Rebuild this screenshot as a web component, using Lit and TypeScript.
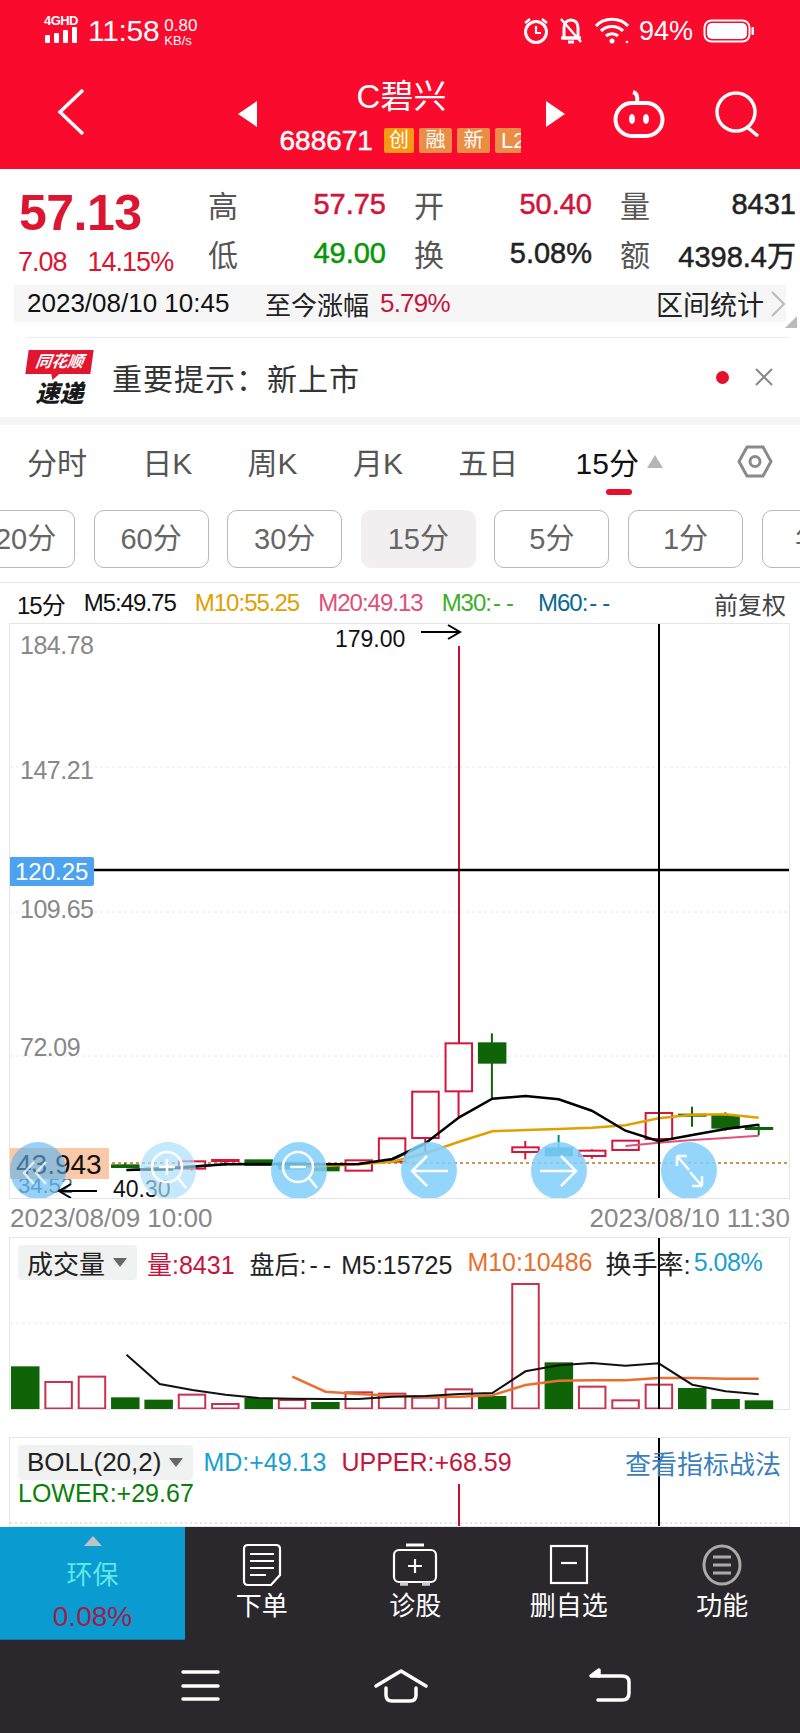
import { LitElement, html, css, svg } from "lit";
import { customElement } from "lit/decorators.js";

const RED = "#d7143a";
const GREEN = "#0f6408";
const TEAL = "#0a8a8a";
const step = 33.35;
const cx = (i: number) => 25 + step * i;
// the numbers below were read off the reference crops, hence the z scale
const my = (z: number) => 980 + z / 3;
const vy = (z: number) => 1230 + z / 3;
const poly = (pts: number[][], scale: (z: number) => number) =>
  pts.map(([x, z]) => `${(x / 1.96).toFixed(1)},${scale(z).toFixed(1)}`).join(" ");

type Candle = [number, number, number, number, number, string, boolean?];
// index, box top, box bottom, wick top, wick bottom, colour, filled
const candles: Candle[] = [
  [3, 556, 561, 550, 564, GREEN, true],
  [4, 566, 570, 562, 572, GREEN, true],
  [5, 544, 566, 540, 572, RED],
  [6, 540, 543, 538, 557, RED],
  [7, 541, 555, 541, 558, GREEN, true],
  [8, 548, 566, 548, 566, TEAL, true],
  [9, 558, 571, 558, 572, GREEN, true],
  [10, 541, 572, 541, 572, RED],
  [11, 475, 545, 475, 545, RED],
  [12, 335, 474, 335, 515, RED],
  [13, 190, 334, 190, 410, RED],
  [14, 190, 248, 160, 356, GREEN, true],
  [15, 502, 516, 483, 538, RED],
  [16, 505, 526, 465, 526, TEAL, true],
  [17, 512, 528, 508, 536, RED],
  [18, 482, 510, 482, 510, RED],
  [19, 399, 477, 399, 477, RED],
  [20, 404, 406, 380, 440, GREEN, true],
  [21, 408, 443, 397, 452, GREEN, true],
  [22, 444, 446, 432, 466, GREEN, true],
];

const volumes: [number, boolean][] = [
  [412, true], [456, false], [440, false], [505, true], [512, true], [494, false],
  [522, false], [507, true], [510, false], [519, true], [487, false], [491, false],
  [503, false], [478, false], [501, true], [162, false], [400, true], [470, false],
  [511, false], [464, false], [477, true], [510, true], [514, true],
];

const mainBlack = [[248,570],[311,568],[377,560],[442,553],[507,552],[573,553],[638,553],[703,552],[769,537],[834,490],[900,412],[965,356],[1030,348],[1095,358],[1160,392],[1226,452],[1291,484],[1357,465],[1422,447],[1487,434]];
const mainOrange = [[573,562],[638,558],[703,553],[769,545],[834,520],[900,485],[965,454],[1030,450],[1095,447],[1160,443],[1226,436],[1291,415],[1357,404],[1422,403],[1487,413]];
const mainPink = [[1226,498],[1291,488],[1357,480],[1422,474],[1487,467]];
const mainTeal = [[248,570],[442,553],[703,551],[769,540],[834,492]];
const volBlack = [[248,374],[313,462],[377,480],[442,494],[507,504],[573,506],[638,507],[703,507],[769,500],[834,498],[900,492],[965,489],[1030,424],[1095,406],[1160,399],[1226,407],[1291,400],[1357,464],[1422,484],[1487,493]];
const volOrange = [[573,440],[638,485],[703,492],[769,497],[834,500],[900,500],[965,496],[1030,465],[1095,452],[1160,451],[1226,451],[1291,444],[1357,444],[1422,446],[1487,446]];

@customElement("app-root")
export class AppRoot extends LitElement {
  static styles = css`
    :host {
      display: block;
      width: 800px;
      height: 1733px;
      overflow: hidden;
      background: #fff;
      font-family: "Liberation Sans", "Noto Sans CJK SC", sans-serif;
      color: #222;
    }
    .page { display: flex; flex-direction: column; height: 1733px; }

    .header { height: 169px; background: #fa0a2c; color: #fff; flex: none; }
    .status { display: flex; align-items: center; height: 30px; padding: 16px 45px 0 44px; }
    .net { width: 36px; margin-right: 8px; }
    .net b { display: block; font-size: 13px; line-height: 12px; letter-spacing: -0.6px; }
    .time { font-size: 30px; line-height: 30px; margin-right: 5px; letter-spacing: -0.3px; }
    .speed { font-size: 13px; line-height: 11px; text-align: left; }
    .speed span:first-child { display: block; font-size: 17px; line-height: 18px; }
    .status-right { margin-left: auto; display: flex; align-items: center; gap: 10px; }
    .alarm { margin-right: -2px; }
    .batt-text { font-size: 27px; margin: 0 0 0 -5px; }

    .nav { display: flex; align-items: center; height: 111px; padding: 12px 0 0 57px; }
    .nav .back { width: 181px; flex: none; }
    .center { width: 289px; flex: none; display: flex; flex-direction: column; align-items: center; }
    .title { font-size: 33px; line-height: 38px; margin-top: 6px; }
    .code { display: flex; align-items: center; gap: 5px; height: 30px; margin-top: 10px; font-size: 28px; width: 244px; }
    .code .num { margin-right: 6px; -webkit-text-stroke: 0.5px #fff; }
    .chip { height: 25px; width: 33px; background: #ea8e45; border-radius: 2px; font-size: 20px; line-height: 25px; text-align: center; flex: none; overflow: hidden; }
    .chip.first { width: 30px; background: #f59a12; }
    .chip.last { width: 26px; text-align: left; padding-left: 6px; box-sizing: border-box; border-radius: 2px 0 0 2px; white-space: nowrap; font-size: 22px; }
    .nav-tools { display: flex; gap: 49px; margin-left: 48px; align-items: center; }

    .quote { display: flex; height: 116px; flex: none; }
    .q-left { width: 208px; flex: none; padding-left: 19px; box-sizing: border-box; color: #dc1530; }
    .price { font-size: 50px; line-height: 56px; font-weight: 700; margin-top: 16px; letter-spacing: -0.5px; }
    .delta { font-size: 27px; line-height: 32px; margin-top: 5px; display: flex; gap: 21px; margin-left: -1px; letter-spacing: -1px; }
    .q-grid { display: grid; grid-template-columns: 178px 178px 176px; column-gap: 28px; grid-auto-rows: 49px; padding-top: 11px; }
    .cell { display: flex; justify-content: space-between; align-items: center; font-size: 29px; white-space: nowrap; }
    .cell span { font-size: 30px; color: #555; margin-top: -2px; }
    .cell b { font-weight: 400; -webkit-text-stroke: 0.5px currentColor; }
    .up { color: #d0143a; }
    .down { color: #0a960a; }
    .dark { color: #222; }

    .strip { display: flex; align-items: center; height: 37px; margin: 0 14px; background: #f6f6f6; flex: none; font-size: 26px; padding-left: 13px; position: relative; }
    .strip .date { width: 238px; color: #111; }
    .strip .pct { margin-left: 11px; color: #c8143c; letter-spacing: -0.8px; }
    .strip .stat { margin-left: auto; margin-right: 6px; font-size: 27px; }
    .strip::after { content: ""; position: absolute; right: -11px; bottom: -6px; border-style: solid; border-width: 0 0 12px 12px; border-color: transparent transparent #bbb transparent; }

    .news { height: 80px; margin: 15px 0 0; flex: none; display: flex; align-items: center; position: relative; padding: 0 27px; box-sizing: border-box; }
    .news::before { content: ""; position: absolute; top: 0; left: 27px; right: 10px; height: 1px; background: #ececec; }
    .logo { width: 65px; margin: 3px 20px 0 0; flex: none; }
    .logo-top { height: 24px; background: #e2162e; color: #fff; font-size: 16px; line-height: 24px; text-align: center; font-weight: 700; transform: skewX(-8deg); font-style: italic; position: relative; }
    .logo-top::after { content: ""; position: absolute; left: 26px; bottom: -6px; border-style: solid; border-width: 6px 6px 0 2px; border-color: #e2162e transparent transparent transparent; }
    .logo-bot { font-size: 24px; line-height: 26px; font-weight: 900; font-style: italic; text-align: center; color: #1a1a1a; margin-top: 7px; }
    .news-text { font-size: 30px; color: #333; letter-spacing: 1px; }
    .dot { width: 13px; height: 13px; background: #e60f2c; border-radius: 50%; margin-left: auto; margin-right: 26px; }
    .band { height: 8px; background: #f5f5f5; flex: none; }

    .tabs { display: flex; align-items: center; height: 72px; padding: 0 27px 8px; gap: 55.3px; font-size: 30px; color: #555; flex: none; }
    .tab.active { color: #111; position: relative; display: flex; align-items: center; margin-left: 2px; }
    .tab.active::after { content: ""; position: absolute; left: 30px; bottom: -12px; width: 26px; height: 6px; border-radius: 3px; background: #e60f2c; }
    .caret { margin-left: 8px; }
    .hex { margin-left: auto; }

    .periods { display: flex; gap: 18.6px; margin: 5px 0 0 -40px; height: 58px; flex: none; }
    .period { width: 115px; flex: none; box-sizing: border-box; border: 1px solid #b8b8b8; border-radius: 10px; font-size: 29px; line-height: 56px; text-align: center; color: #666; }
    .period.on { background: #f1efef; border-color: #f1efef; }
    .sep { height: 1px; background: #e8e8e8; flex: none; margin-top: 14px; }

    .ma { display: flex; align-items: center; height: 40px; padding: 0 14px 0 17px; font-size: 24px; white-space: nowrap; flex: none; color: #111; letter-spacing: -1px; }
    .ma span { margin-right: 19px; }
    .ma .dash { letter-spacing: 5px; margin: 0 0 0 2px; }
    .ma .tail { margin: 0 0 0 auto; color: #444; letter-spacing: 0; }
    .c-m10 { color: #e0a000; }
    .c-m20 { color: #e0507a; }
    .c-m30 { color: #3cb028; }
    .c-m60 { color: #0a6a90; }

    .panel { margin: 0 10px 0 9px; border: 1px solid #e6e6e6; position: relative; flex: none; overflow: hidden; }
    .panel svg.plot { display: block; position: absolute; left: 0; top: 0; }
    .panel svg text { font-family: "Liberation Sans", "Noto Sans CJK SC", sans-serif; }
    .main { height: 574px; }
    .axis { letter-spacing: -0.5px; }
    .dates { display: flex; justify-content: space-between; height: 38px; align-items: center; font-size: 26px; color: #888; padding: 0 10px; flex: none; }
    .ctrl { position: absolute; left: 0; bottom: -1px; display: flex; gap: 74.3px; }
    .ctrl div { width: 56px; height: 57px; border-radius: 50%; background: rgba(130, 207, 250, 0.86); }
    .ctrl div.first { background: rgba(90, 180, 240, 0.62); }
    .ctrl div.pale { background: rgba(170, 222, 250, 0.68); }
    .ctrl svg { display: block; }

    .vol { height: 171px; }
    .bar-text { position: relative; display: flex; align-items: center; height: 35px; margin: 7px 0 0 8px; font-size: 25px; white-space: nowrap; }
    .pick { display: flex; align-items: center; background: #f0f1f1; border-radius: 4px; height: 35px; padding: 0 10px 0 9px; margin-right: 10px; font-size: 26px; color: #222; }
    .pick i { margin-left: 8px; border-style: solid; border-width: 9px 7px 0; border-color: #666 transparent transparent; }
    .bar-text span { margin-right: 15px; }
    .bar-text .dash { letter-spacing: 5px; margin: 0 5px 0 3px; }
    .bar-text .rate { margin-right: 3px; font-size: 26px; }
    .c-red { color: #c8143c; }
    .bar-text .c-orange { color: #e87030; margin-right: 13px; }
    .bar-text .c-blue { color: #18a0d0; }
    .bar-text .tight { margin: 0; letter-spacing: -0.5px; }
    .boll { height: 88px; margin-top: 27px; }
    .bar-text .link { margin-left: auto; margin-right: 8px; color: #3a80c0; font-size: 26px; }
    .lower { position: relative; font-size: 25px; line-height: 26px; color: #0a800a; margin: 0 0 0 8px; }

    .bottom { flex: 1; background: #2a282d; color: #fff; }
    .toolbar { display: flex; height: 113px; }
    .sector { width: 185px; background: #0a9bd0; display: flex; flex-direction: column; align-items: center; flex: none; border-bottom: 1px solid #0b7fa8; box-sizing: border-box; }
    .sector i { margin-top: 9px; border-style: solid; border-width: 0 9px 10px; border-color: transparent transparent #bcc4c8; }
    .sector b { font-weight: 400; font-size: 26px; line-height: 30px; color: #5fe8e8; margin-top: 14px; }
    .sector em { font-style: normal; font-size: 28px; line-height: 32px; color: #a0204a; margin-top: 11px; }
    .tools { display: flex; flex: 1; }
    .tool { width: 153.5px; flex: none; display: flex; flex-direction: column; align-items: center; font-size: 26px; line-height: 30px; padding-top: 16px; box-sizing: border-box; }
    .tool svg { display: block; margin-bottom: 4px; }
    .sys { height: 93px; }
    .sys svg { display: block; }
  `;

  mainChart() {
    return svg`<svg class="plot" width="779" height="574" viewBox="10 624 779 574" fill="none">
      ${[767, 912, 1056].map((y) => svg`<line x1="10" x2="789" y1=${y} y2=${y} stroke="#e8e8e8" stroke-dasharray="3 3"/>`)}
      <line x1="10" x2="789" y1="1163" y2="1163" stroke="#c0701c" stroke-width="1.5" stroke-dasharray="3 3"/>
      <line x1="459" x2="459" y1="646" y2="1050" stroke="#c8102e" stroke-width="2"/>
      ${candles.map(([i, t, b, wt, wb, c, fill]) => {
        const x = cx(i);
        return svg`<line x1=${x} x2=${x} y1=${my(wt)} y2=${my(wb)} stroke=${c} stroke-width="2"/>
          <rect x=${x - 13} y=${my(t)} width="26.5" height=${Math.max((b - t) / 3, 1)} fill=${fill ? c : "#fff"} stroke=${c} stroke-width="2"/>`;
      })}
      <polyline points=${poly(mainTeal, my)} stroke="#0a6a90" stroke-width="2"/>
      <polyline points=${poly(mainPink, my)} stroke="#e0507a" stroke-width="2"/>
      <polyline points=${poly(mainOrange, my)} stroke="#e0a000" stroke-width="2.5"/>
      <polyline points=${poly(mainBlack, my)} stroke="#000" stroke-width="2.5"/>
      <line x1="94" x2="789" y1="870" y2="870" stroke="#000" stroke-width="2.5"/>
      <line x1="659" x2="659" y1="624" y2="1198" stroke="#000" stroke-width="2"/>
      <g class="axis" font-size="25" fill="#888">
        <text x="20" y="654">184.78</text>
        <text x="20" y="779">147.21</text>
        <text x="20" y="918">109.65</text>
        <text x="20" y="1056">72.09</text>
      </g>
      <rect x="9" y="857" width="85" height="29" rx="2" fill="#4da3ef"/>
      <text x="15" y="880" font-size="24" fill="#fff">120.25</text>
      <text x="335" y="647" font-size="23" fill="#111">179.00</text>
      <path d="M421 632H459M448 625L460 632L448 639" stroke="#000" stroke-width="2"/>
      <text x="18" y="1193" font-size="22" fill="#5f7f94">34.52</text>
      <rect x="9" y="1148" width="100" height="31" fill="#fbc8a8"/>
      <text x="16" y="1174" font-size="28" fill="#111">43.943</text>
      <path d="M97 1191H60M71 1184L59 1191L71 1198" stroke="#000" stroke-width="2"/>
      <text x="113" y="1197" font-size="23" fill="#111">40.30</text>
    </svg>`;
  }

  controls() {
    const s = "#fff";
    const icons = [
      svg`<path d="M24 20L14 31L24 42M36 20L26 31L36 42" stroke=${s} stroke-width="2.5" opacity=".7"/>`,
      svg`<circle cx="27" cy="25" r="15" stroke=${s} stroke-width="2.5"/><path d="M38 36L46 46M27 17V33M19 25H35" stroke=${s} stroke-width="2.5"/>`,
      svg`<circle cx="27" cy="25" r="15" stroke=${s} stroke-width="2.5"/><path d="M38 36L46 46M19 25H35" stroke=${s} stroke-width="2.5"/>`,
      svg`<path d="M47 29H12M26 14L11 29L26 44" stroke=${s} stroke-width="2.5"/>`,
      svg`<path d="M9 29H44M30 14L45 29L30 44" stroke=${s} stroke-width="2.5"/>`,
      svg`<path d="M16 14L28 28M16 14V24M16 14H26M41 44L29 30M41 44V34M41 44H31" stroke=${s} stroke-width="2.5"/>`,
    ];
    return html`<div class="ctrl">
      ${icons.map(
        (ic, i) => html`<div class=${i === 0 ? "first" : i === 1 ? "pale" : ""}>
          <svg width="56" height="57" viewBox="0 0 56 57" fill="none">${ic}</svg>
        </div>`
      )}
    </div>`;
  }

  volChart() {
    return svg`<svg class="plot" width="779" height="171" viewBox="10 1238 779 171" fill="none">
      <line x1="10" x2="789" y1="1323" y2="1323" stroke="#e8e8e8" stroke-dasharray="3 3"/>
      ${volumes.map(([z, fill], i) => {
        const top = vy(z);
        return svg`<rect x=${cx(i) - 13} y=${top} width="26.5" height=${1408.5 - top} fill=${fill ? GREEN : "#fff"} stroke=${fill ? GREEN : "#c8324c"} stroke-width="2"/>`;
      })}
      <polyline points=${poly(volOrange, vy)} stroke="#e87030" stroke-width="2.5"/>
      <polyline points=${poly(volBlack, vy)} stroke="#111" stroke-width="2"/>
      <line x1="659" x2="659" y1="1238" y2="1410" stroke="#000" stroke-width="2"/>
    </svg>`;
  }

  bollChart() {
    return svg`<svg class="plot" width="779" height="88" viewBox="10 1438 779 88" fill="none">
      <line x1="10" x2="789" y1="1523" y2="1523" stroke="#ccc" stroke-dasharray="2 3"/>
      <line x1="459" x2="459" y1="1484" y2="1527" stroke="#c8102e" stroke-width="2"/>
      <line x1="659" x2="659" y1="1438" y2="1527" stroke="#000" stroke-width="2"/>
    </svg>`;
  }

  render() {
    return html`<div class="page">
      <div class="header">
        <div class="status">
          <div class="net">
            <b>4GHD</b>
            <svg width="34" height="16" viewBox="0 0 34 16" fill="#fff">
              <rect x="1" y="8" width="5" height="8" rx="1"/><rect x="10" y="6" width="5" height="10" rx="1"/>
              <rect x="19" y="3" width="5" height="13" rx="1"/><rect x="28" y="0" width="5" height="16" rx="1"/>
            </svg>
          </div>
          <div class="time">11:58</div>
          <div class="speed"><span>0.80</span><span>KB/s</span></div>
          <div class="status-right">
            <svg class="alarm" width="28" height="28" viewBox="0 0 28 28" fill="none" stroke="#fff" stroke-width="3">
              <circle cx="14" cy="15" r="10.5"/><path d="M14 9V16H19" stroke-width="2.2"/><path d="M3 6L8 2M25 6L20 2" stroke-width="2.5"/>
            </svg>
            <svg width="26" height="28" viewBox="0 0 26 28" fill="none" stroke="#fff" stroke-width="3">
              <path d="M6 21V11C6 6 9 3 13 3S20 6 20 11V21Z"/><path d="M3 21H23" /><path d="M10 25H16"/><path d="M3 2L23 25" stroke-width="2.5"/>
            </svg>
            <svg width="40" height="28" viewBox="0 0 40 28" fill="none" stroke="#fff" stroke-width="3.2">
              <path d="M2 9C10 0 26 0 34 9M7 14C13 8 23 8 29 14M12 19C15 16 21 16 24 19"/><circle cx="18" cy="24" r="2.5" fill="#fff" stroke="none"/><circle cx="33" cy="25" r="1.3" fill="#fff" stroke="none"/>
            </svg>
            <span class="batt-text">94%</span>
            <svg width="52" height="24" viewBox="0 0 52 24" fill="none">
              <rect x="1.5" y="1.5" width="45" height="21" rx="7" stroke="#fff" stroke-width="2"/>
              <rect x="4" y="4" width="40" height="16" rx="5" fill="#fff"/>
              <rect x="48.5" y="8" width="2.5" height="8" rx="1" fill="#fff"/>
            </svg>
          </div>
        </div>
        <div class="nav">
          <div class="back">
            <svg width="28" height="48" viewBox="0 0 28 48" fill="none" stroke="#fff" stroke-width="3.5"><path d="M26 2L3 24L26 46"/></svg>
          </div>
          <svg width="19" height="26" viewBox="0 0 19 26" fill="#fff"><path d="M19 0V26L0 13Z"/></svg>
          <div class="center">
            <div class="title">C碧兴</div>
            <div class="code">
              <span class="num">688671</span>
              <span class="chip first">创</span><span class="chip">融</span><span class="chip">新</span><span class="chip last">L2</span>
            </div>
          </div>
          <svg width="19" height="26" viewBox="0 0 19 26" fill="#fff"><path d="M0 0V26L19 13Z"/></svg>
          <div class="nav-tools">
            <svg width="52" height="48" viewBox="0 0 52 48" fill="none" stroke="#fff" stroke-width="4">
              <path d="M20 2C24 3 25 7 24 13"/><rect x="2.5" y="13" width="47" height="33" rx="16.5"/>
              <ellipse cx="19" cy="29" rx="3" ry="5" fill="#fff" stroke="none"/><ellipse cx="33" cy="29" rx="3" ry="5" fill="#fff" stroke="none"/>
            </svg>
            <svg width="46" height="46" viewBox="0 0 46 46" fill="none" stroke="#fff" stroke-width="3.5">
              <circle cx="22" cy="21" r="19"/><path d="M33 36L44 45"/>
            </svg>
          </div>
        </div>
      </div>

      <div class="quote">
        <div class="q-left">
          <div class="price">57.13</div>
          <div class="delta"><span>7.08</span><span>14.15%</span></div>
        </div>
        <div class="q-grid">
          <div class="cell"><span>高</span><b class="up">57.75</b></div>
          <div class="cell"><span>开</span><b class="up">50.40</b></div>
          <div class="cell"><span>量</span><b class="dark">8431</b></div>
          <div class="cell"><span>低</span><b class="down">49.00</b></div>
          <div class="cell"><span>换</span><b class="dark">5.08%</b></div>
          <div class="cell"><span>额</span><b class="dark">4398.4万</b></div>
        </div>
      </div>

      <div class="strip">
        <span class="date">2023/08/10 10:45</span>
        <span>至今涨幅</span><span class="pct">5.79%</span>
        <span class="stat">区间统计</span>
        <svg width="16" height="28" viewBox="0 0 16 28" fill="none" stroke="#bbb" stroke-width="2"><path d="M2 2L14 14L2 26"/></svg>
      </div>

      <div class="news">
        <div class="logo">
          <div class="logo-top">同花顺</div>
          <div class="logo-bot">速递</div>
        </div>
        <div class="news-text">重要提示：新上市</div>
        <div class="dot"></div>
        <svg width="18" height="18" viewBox="0 0 18 18" fill="none" stroke="#888" stroke-width="2"><path d="M1 1L17 17M17 1L1 17"/></svg>
      </div>
      <div class="band"></div>

      <div class="tabs">
        <span>分时</span><span>日K</span><span>周K</span><span>月K</span><span>五日</span>
        <span class="tab active">15分<svg class="caret" width="16" height="13" viewBox="0 0 16 13" fill="#b5b5b5"><path d="M8 0L16 13H0Z"/></svg></span>
        <svg class="hex" width="36" height="33" viewBox="0 0 36 33" fill="none" stroke="#8a8a8a" stroke-width="3">
          <path d="M10 2H26L34 16.5L26 31H10L2 16.5Z"/><circle cx="18" cy="16.5" r="5"/>
        </svg>
      </div>

      <div class="periods">
        ${["120分", "60分", "30分", "15分", "5分", "1分", "年K"].map(
          (p) => html`<div class="period ${p === "15分" ? "on" : ""}">${p}</div>`
        )}
      </div>
      <div class="sep"></div>

      <div class="ma">
        <span>15分</span><span>M5:49.75</span>
        <span class="c-m10">M10:55.25</span>
        <span class="c-m20">M20:49.13</span>
        <span class="c-m30">M30:<span class="dash">--</span></span>
        <span class="c-m60">M60:<span class="dash">--</span></span>
        <span class="tail">前复权</span>
      </div>

      <div class="panel main">${this.mainChart()}${this.controls()}</div>
      <div class="dates"><span>2023/08/09 10:00</span><span>2023/08/10 11:30</span></div>

      <div class="panel vol">
        ${this.volChart()}
        <div class="bar-text">
          <div class="pick">成交量<i></i></div>
          <span class="c-red">量:8431</span>
          <span>盘后:<span class="dash">--</span>M5:15725</span>
          <span class="c-orange">M10:10486</span>
          <span class="rate">换手率:</span><span class="c-blue tight">5.08%</span>
        </div>
      </div>

      <div class="panel boll">
        ${this.bollChart()}
        <div class="bar-text">
          <div class="pick">BOLL(20,2)<i></i></div>
          <span class="c-blue">MD:+49.13</span>
          <span class="c-red">UPPER:+68.59</span>
          <span class="link">查看指标战法</span>
        </div>
        <div class="lower">LOWER:+29.67</div>
      </div>

      <div class="bottom">
        <div class="toolbar">
          <div class="sector"><i></i><b>环保</b><em>0.08%</em></div>
          <div class="tools">
            <div class="tool">
              <svg width="40" height="44" viewBox="0 0 40 44" fill="none" stroke="#fff" stroke-width="2.2">
                <path d="M6 2H34Q38 2 38 6V32L29 42H6Q2 42 2 38V6Q2 2 6 2Z"/><path d="M8 11H32M8 18H32M8 25H32M8 32H24"/>
              </svg>
              下单
            </div>
            <div class="tool">
              <svg width="46" height="44" viewBox="0 0 46 44" fill="none" stroke="#fff" stroke-width="2.2">
                <path d="M14 2H32" stroke-width="3"/><rect x="2" y="7" width="42" height="32" rx="5"/><path d="M23 16V30M16 23H30"/><path d="M8 41H16M30 41H38" stroke-width="3.5" stroke="#ccc"/>
              </svg>
              诊股
            </div>
            <div class="tool">
              <svg width="40" height="44" viewBox="0 0 40 44" fill="none" stroke="#fff" stroke-width="2.2">
                <rect x="2" y="3" width="36" height="37"/><path d="M12 20H28"/>
              </svg>
              删自选
            </div>
            <div class="tool">
              <svg width="42" height="44" viewBox="0 0 42 44" fill="none" stroke="#aaa" stroke-width="3">
                <ellipse cx="21" cy="22" rx="18" ry="19"/><path d="M12 14H30M12 22H30M12 30H30"/>
              </svg>
              功能
            </div>
          </div>
        </div>
        <div class="sys">
          <svg width="800" height="93" viewBox="0 1640 800 93" fill="none" stroke="#fff" stroke-width="3.5" stroke-linecap="round" stroke-linejoin="round">
            <path d="M183 1672H218M183 1686H218M183 1699H218"/>
            <path d="M376 1686L401 1671L426 1686M386 1688V1695Q386 1701 392 1701H410Q416 1701 416 1695V1688"/>
            <path d="M598 1676H622Q629 1676 629 1682V1693Q629 1700 622 1700H598"/>
            <path d="M599 1670L591 1676H599Z" fill="#fff"/>
          </svg>
        </div>
      </div>
    </div>`;
  }
}
